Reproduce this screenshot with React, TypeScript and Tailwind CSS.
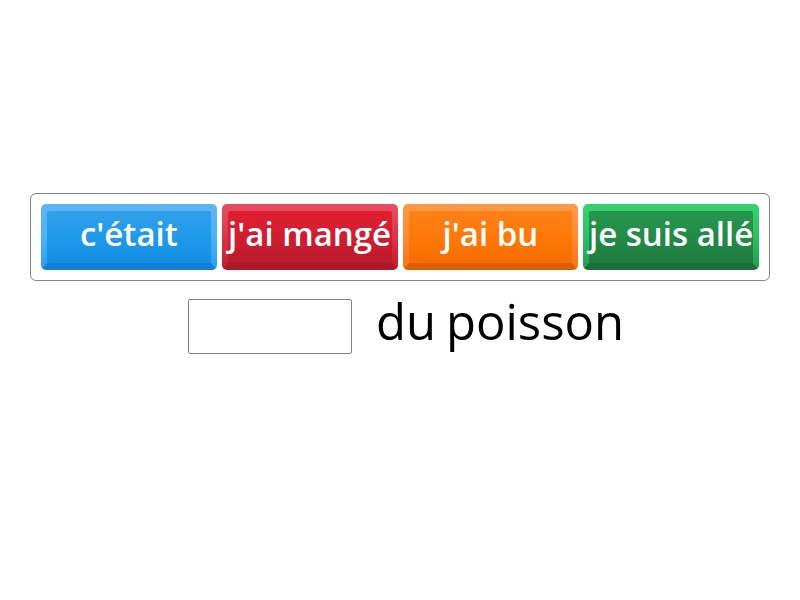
const words = [
  {
    text: "c'était",
    frame: "from-[#5bb5f3] from-10% via-[#4fb1f5] to-[#2a9cec] border-b-[#1180d3fa]",
    face: "from-[#309fea] via-[#1f9aea] to-[#118fe5]",
  },
  {
    text: "j'ai mangé",
    frame: "from-[#e64d5c] from-10% via-[#dc3346] to-[#c01c30] border-b-[#a9182afa]",
    face: "from-[#e01f33] via-[#d01d31] to-[#b91b2d]",
  },
  {
    text: "j'ai bu",
    frame: "from-[#ff9747] from-10% via-[#ff8b30] to-[#f57510] border-b-[#dc6000fa]",
    face: "from-[#ff8118] via-[#ff7908] to-[#f56c00]",
  },
  {
    text: "je suis allé",
    frame: "from-[#35cf6d] from-10% via-[#2cc062] to-[#259a50] border-b-[#1d6e3afa]",
    face: "from-[#26974d] via-[#228b47] to-[#1f7b3f]",
  },
];

export default function App() {
  return (
    <main className="flex min-h-screen flex-col justify-center bg-white px-[30px] pb-[54px] font-['Open_Sans','Noto_Sans',sans-serif] text-black">
      <div className="grid grid-cols-4 gap-[5px] rounded-md border border-[#858585] p-[10px]">
        {words.map((word) => (
          <button
            key={word.text}
            type="button"
            className={`h-[66px] min-w-0 rounded-[5px] border-x-[6px] border-y-[7px] border-transparent bg-linear-to-b bg-origin-border ${word.frame}`}
          >
            <span
              className={`flex h-full items-center justify-center rounded-xs bg-linear-to-b pb-[6px] text-[33px] font-semibold whitespace-nowrap text-white ${word.face}`}
            >
              {word.text}
            </span>
          </button>
        ))}
      </div>
      <div className="mt-[18px] flex items-start justify-center pl-3 text-[49px] leading-[44px]">
        <input
          type="text"
          aria-label="Mot manquant"
          className="mr-6 h-[55px] w-[164px] rounded-xs border border-[#858585] bg-white px-2 text-center text-[32px]"
        />
        <span className="mr-[10px]">du</span>
        <span>poisson</span>
      </div>
    </main>
  );
}
